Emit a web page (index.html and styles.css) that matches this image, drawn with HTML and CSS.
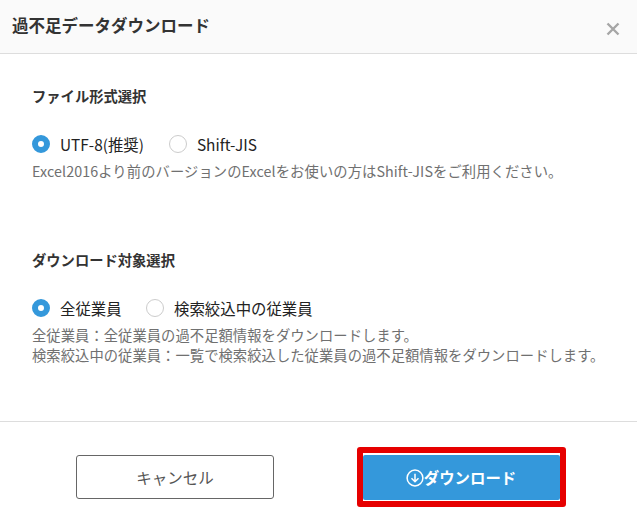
FILE: index.html
```html
<!DOCTYPE html>
<html lang="ja">
<head>
<meta charset="utf-8">
<title>過不足データダウンロード</title>
<link rel="stylesheet" href="styles.css">
</head>
<body>
<div class="dialog">
  <header class="header">
    <h1 class="title">過不足データダウンロード</h1>
    <button class="close" aria-label="閉じる"><svg width="14" height="14" viewBox="0 0 14 14"><path d="M1.5 1.5L12.5 12.5M12.5 1.5L1.5 12.5"/></svg></button>
  </header>
  <main class="body">
    <section class="group">
      <h2 class="heading">ファイル形式選択</h2>
      <div class="options">
        <label class="option"><span class="radio checked"></span><span class="label">UTF-8(推奨)</span></label>
        <label class="option"><span class="radio"></span><span class="label">Shift-JIS</span></label>
      </div>
      <p class="note encoding-note"><span class="line">Excel2016より前のバージョンのExcelをお使いの方はShift-JISをご利用ください。</span></p>
    </section>
    <section class="group">
      <h2 class="heading">ダウンロード対象選択</h2>
      <div class="options target-options">
        <label class="option"><span class="radio checked"></span><span class="label">全従業員</span></label>
        <label class="option"><span class="radio"></span><span class="label">検索絞込中の従業員</span></label>
      </div>
      <p class="note"><span class="line">全従業員：全従業員の過不足額情報をダウンロードします。</span><span class="line">検索絞込中の従業員：一覧で検索絞込した従業員の過不足額情報をダウンロードします。</span></p>
    </section>
  </main>
  <footer class="footer">
    <button class="cancel">キャンセル</button>
    <div class="highlight"><button class="download"><svg width="18" height="18" viewBox="0 0 18 18"><circle cx="9" cy="9" r="7.9"/><path d="M9 4.8V12.5M5.5 9.3L9 12.8L12.5 9.3"/></svg><span>ダウンロード</span></button></div>
  </footer>
</div>
</body>
</html>
```
FILE: styles.css
```css
* { box-sizing: border-box; }
body { margin: 0; background: #fff; color: #333; font-family: "Noto Sans CJK JP", sans-serif; }
h1, h2, p { margin: 0; }
button { font: inherit; padding: 0; }
.dialog { width: 637px; height: 531px; overflow: hidden; display: flex; flex-direction: column; }
.header { height: 54px; flex: none; background: #fafafa; border-bottom: 1px solid #ddd; display: flex; justify-content: space-between; padding: 0 17px 0 12px; }
.title { font-size: 16.5px; line-height: 50px; font-weight: 700; white-space: nowrap; }
.close { border: 0; background: none; width: 14px; height: 14px; margin-top: 22px; }
.close svg { display: block; fill: none; stroke: #a6a6a6; stroke-width: 2.4; }
.body { height: 367px; flex: none; padding: 31px 32px 0; }
.group { height: 164px; }
.heading { font-size: 14.3px; line-height: 22px; height: 22px; white-space: nowrap; }
.options { display: flex; gap: 25px; height: 22px; margin-top: 26px; }
.target-options { gap: 24.5px; }
.option { display: flex; align-items: center; gap: 10px; }
.radio { width: 18px; height: 18px; border: 1px solid #ccc; border-radius: 50%; margin-top: -1px; }
.radio.checked { border: 6px solid #3498db; }
.label { font-size: 15.4px; line-height: 22px; margin-top: -1px; color: #222; white-space: nowrap; }
.note { font-size: 14.3px; line-height: 20px; margin-top: 6px; color: #707070; letter-spacing: 0.05px; }
.encoding-note { letter-spacing: 0.09px; }
.line { display: block; white-space: nowrap; }
.footer { flex: 1; border-top: 1px solid #ddd; display: flex; align-items: flex-start; padding: 25px 71px 0 76px; justify-content: space-between; }
.cancel { width: 198px; height: 44px; margin-top: 8px; border: 1px solid #666; border-radius: 3px; background: #fff; color: #555; font-size: 15.5px; }
.highlight { width: 209px; height: 60px; border: 6px solid #e60000; border-radius: 3px; display: flex; padding: 2px 0 1px; }
.download { flex: 1; border: 0; border-radius: 2px; background: #3498db; color: #fff; font-weight: 700; font-size: 15.4px; display: flex; align-items: center; justify-content: center; padding: 0 1px 1px 0; }
.download svg { fill: none; stroke: #fff; stroke-width: 1.5; margin-top: 2px; }
```
